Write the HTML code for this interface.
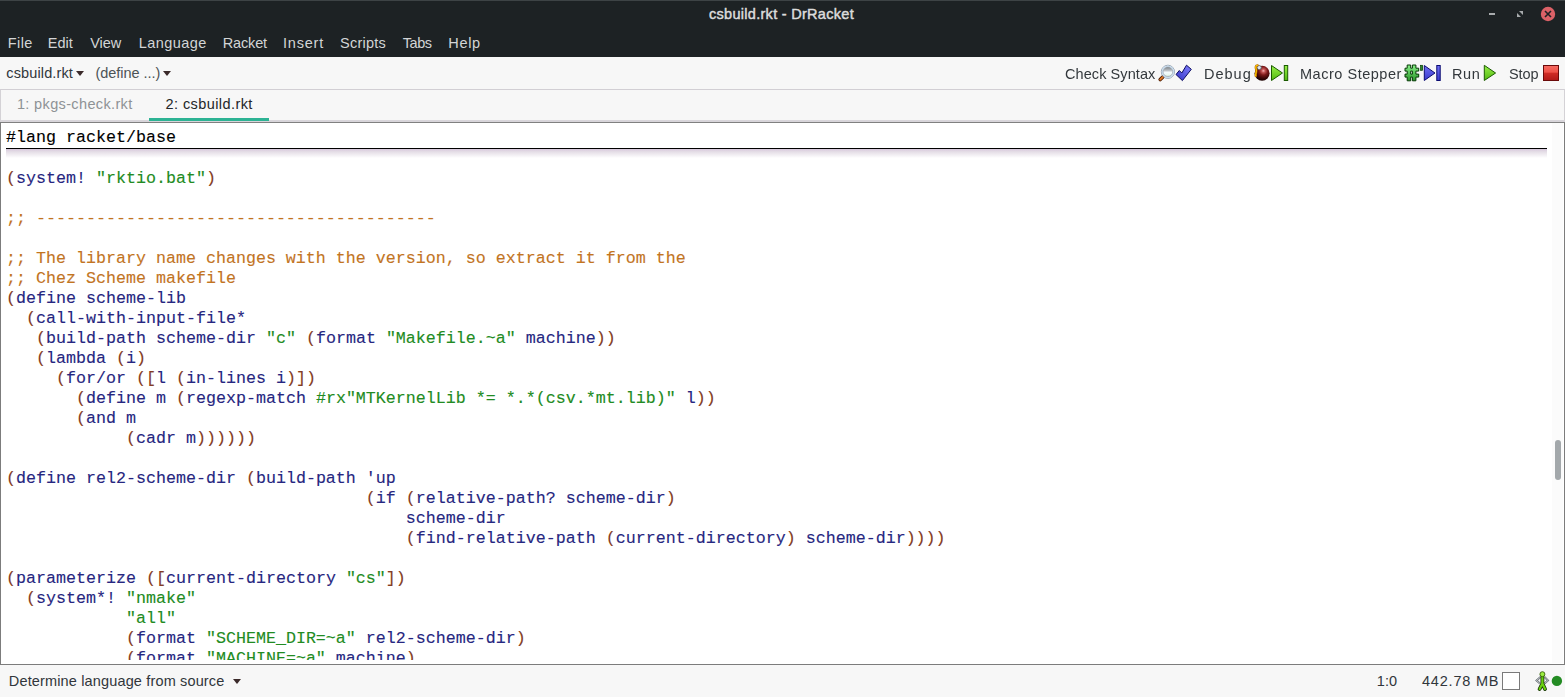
<!DOCTYPE html>
<html><head><meta charset="utf-8">
<style>
*{margin:0;padding:0;box-sizing:border-box}
html,body{width:1565px;height:697px;overflow:hidden;background:#f7f7f7;font-family:"Liberation Sans",sans-serif}
.a{position:absolute;white-space:pre;line-height:1}
#title{position:absolute;left:0;top:0;width:1565px;height:57px;background:#1d2224;border-top:1px solid #3d4345}
#ttext{left:709px;top:5px;font-size:15px;font-weight:normal;-webkit-text-stroke:0.45px #dcdcdc;color:#dcdcdc}
.m{top:36px;font-size:14.5px;color:#d3d5d6}
.tb{font-size:14.5px;color:#31363b}
.tbl{top:66px}
.tbr{top:67px;color:#33383c;will-change:transform}
.tab{top:97px;font-size:14.5px}
#tabs{position:absolute;left:0;top:89px;width:1565px;height:33px;background:#f7f7f7;border-top:1px solid #d2cfd4;border-left:1px solid #d4d2d6;border-right:1px solid #d4d2d6;border-bottom:2px solid #d8d5da}
#editor{position:absolute;left:0;top:122px;width:1565px;height:543px;background:#fff;border-top:1px solid #808080;border-left:1px solid #7c7c7c;border-right:1px solid #7c7c7c;border-bottom:1px solid #7c7c7c;overflow:hidden}
#status{position:absolute;left:0;top:665px;width:1565px;height:32px;background:#f7f7f7}
.code{position:absolute;left:6px;font-family:"Liberation Mono",monospace;font-size:16.67px;line-height:20px;white-space:pre;color:#262680;-webkit-text-stroke:0.12px currentColor}
.p{color:#843c24}.s{color:#228b22}.c{color:#c2741f}.k{color:#000}
svg{position:absolute;overflow:visible}
</style></head><body>
<div id="title"></div>
<div class="a" id="ttext" style="font-size:14.5px;top:7px;letter-spacing:0.29px">csbuild.rkt - DrRacket</div>
<!-- window buttons -->
<div class="a" style="left:1489px;top:13px;width:6px;height:2px;background:#a8abad"></div>
<svg style="left:1517px;top:11px" width="6" height="6"><path d="M0 6V2L4 6Z M6 0V4L2 0Z" fill="#a8abad"/></svg>
<svg style="left:1540px;top:6px" width="16" height="16"><circle cx="8" cy="8" r="7.2" fill="#db6167"/><path d="M5 5L11 11M11 5L5 11" stroke="#1d2224" stroke-width="1.6"/></svg>

<div class="a m" style="letter-spacing:0.40px;left:7.8px">File</div>
<div class="a m" style="letter-spacing:0.03px;left:47.7px">Edit</div>
<div class="a m" style="letter-spacing:-0.10px;left:90.3px">View</div>
<div class="a m" style="letter-spacing:0.44px;left:138.8px">Language</div>
<div class="a m" style="letter-spacing:-0.16px;left:222.8px">Racket</div>
<div class="a m" style="letter-spacing:0.80px;left:283.0px">Insert</div>
<div class="a m" style="letter-spacing:0.25px;left:340.0px">Scripts</div>
<div class="a m" style="letter-spacing:-0.47px;left:402.8px">Tabs</div>
<div class="a m" style="letter-spacing:0.67px;left:448.3px">Help</div>

<div class="a tb tbl" style="letter-spacing:0.13px;left:6.3px">csbuild.rkt</div>
<svg style="left:76px;top:71px" width="9" height="5"><path d="M0 0H8L4 5Z" fill="#3b2a2a"/></svg>
<div class="a tb tbl" style="color:#4d5356;letter-spacing:-0.05px;left:95.5px">(define ...)</div>
<svg style="left:163px;top:71px" width="9" height="5"><path d="M0 0H8L4 5Z" fill="#3b2a2a"/></svg>

<div class="a tb tbr" style="letter-spacing:0.08px;left:1064.5px">Check Syntax</div>
<svg style="left:1158px;top:64px" width="36" height="18">
 <defs>
  <linearGradient id="lens" x1="0" y1="0" x2="0" y2="1"><stop offset="0" stop-color="#7c8288"/><stop offset="0.35" stop-color="#b8bdc2"/><stop offset="0.55" stop-color="#f4fcff"/><stop offset="0.8" stop-color="#eaf8f4"/><stop offset="1" stop-color="#c8dcc8"/></linearGradient>
  <linearGradient id="chk" x1="1" y1="0" x2="0" y2="1"><stop offset="0" stop-color="#8080ff"/><stop offset="1" stop-color="#3434c4"/></linearGradient>
  <linearGradient id="grn" x1="0" y1="0" x2="0" y2="1"><stop offset="0" stop-color="#98f048"/><stop offset="1" stop-color="#52b810"/></linearGradient>
  <linearGradient id="blu" x1="0" y1="0" x2="0" y2="1"><stop offset="0" stop-color="#7070f4"/><stop offset="1" stop-color="#3838cc"/></linearGradient>
  <linearGradient id="hsh" x1="0" y1="0" x2="0" y2="1"><stop offset="0" stop-color="#88f088"/><stop offset="1" stop-color="#2a962a"/></linearGradient>
  <radialGradient id="bmb" cx="0.55" cy="0.35" r="0.7"><stop offset="0" stop-color="#f0a0a0"/><stop offset="0.3" stop-color="#b04444"/><stop offset="0.7" stop-color="#621010"/><stop offset="1" stop-color="#2a0404"/></radialGradient>
 </defs>
 <path d="M2.2 15.6L4.8 13" stroke="#4a1a00" stroke-width="3.6" stroke-linecap="round"/>
 <path d="M2.2 15.6L4.8 13" stroke="#e07a28" stroke-width="1.8" stroke-linecap="round"/>
 <circle cx="9.9" cy="7.8" r="4.8" fill="url(#lens)"/>
 <circle cx="9.9" cy="7.8" r="6.6" fill="none" stroke="#8090a0" stroke-width="0.8"/>
 <circle cx="9.9" cy="7.8" r="5.7" fill="none" stroke="#c8dcee" stroke-width="1.4"/>
 <circle cx="9.9" cy="7.8" r="4.8" fill="none" stroke="#8e9aa6" stroke-width="0.6"/>
 <path d="M18 10.5L21.3 6.5L23.8 9L28.5 1.2L33.3 5.3L24.4 16.6Z" fill="url(#chk)" stroke="#0a0a60" stroke-width="1"/>
</svg>
<div class="a tb tbr" style="letter-spacing:1.00px;left:1203.5px">Debug</div>
<svg style="left:1254px;top:64px" width="36" height="18">
 <defs><radialGradient id="bmb2" gradientUnits="userSpaceOnUse" cx="9.4" cy="6.8" r="9.5"><stop offset="0" stop-color="#f4b4b4"/><stop offset="0.18" stop-color="#c45454"/><stop offset="0.45" stop-color="#7a1818"/><stop offset="0.8" stop-color="#3a0606"/><stop offset="1" stop-color="#1e0202"/></radialGradient></defs>
 <circle cx="8.1" cy="9.2" r="7.5" fill="url(#bmb2)"/>
 <circle cx="5.2" cy="3.6" r="2.1" fill="#dfe6ec" stroke="#5c646a" stroke-width="0.9"/>
 <path d="M3.6 1.3C1.6 1.2 1.4 3.2 2.2 5.4S1.2 9.6 1.8 12" stroke="#b86000" stroke-width="2.3" fill="none" stroke-linecap="round"/>
 <path d="M3.6 1.3C1.6 1.2 1.4 3.2 2.2 5.4S1.2 9.6 1.8 12" stroke="#ffd400" stroke-width="1.1" fill="none" stroke-linecap="round"/>
 <path d="M17.5 1.5V16.5L28.5 9Z" fill="url(#grn)" stroke="#1a5a00" stroke-width="1"/>
 <rect x="30.3" y="1.5" width="3.4" height="15" fill="url(#grn)" stroke="#1a5a00" stroke-width="1"/>
</svg>
<div class="a tb tbr" style="letter-spacing:0.52px;left:1299.5px">Macro Stepper</div>
<svg style="left:1405px;top:64px" width="36" height="18">
 <path d="M2.2 1H5.7V4.2H7.4V1H10.9V4.2H13.7V7.1H10.9V10.1H13.7V13.1H10.9V16.8H7.4V13.1H5.7V16.8H2.2V13.1H0V10.1H2.2V7.1H0V4.2H2.2Z M5.7 7.1H7.4V10.1H5.7Z" fill="url(#hsh)" stroke="#063a06" stroke-width="1" fill-rule="evenodd"/>
 <rect x="15.6" y="1.3" width="2" height="5" fill="#2a8a2a" stroke="#063a06" stroke-width="0.7"/>
 <path d="M19.3 1.5V16.5L30 9Z" fill="url(#blu)" stroke="#0a0a70" stroke-width="1"/>
 <rect x="31.8" y="1.5" width="3.4" height="15" fill="url(#blu)" stroke="#0a0a70" stroke-width="1"/>
</svg>
<div class="a tb tbr" style="letter-spacing:0.55px;left:1452.4px">Run</div>
<svg style="left:1483px;top:64px" width="14" height="18"><path d="M1.3 1.3V16.5L12.6 9Z" fill="url(#grn)" stroke="#1a5a00" stroke-width="1"/></svg>
<div class="a tb tbr" style="letter-spacing:-0.07px;left:1508.5px">Stop</div>
<svg style="left:1543px;top:65px" width="16" height="16"><defs><linearGradient id="red" x1="0" y1="0" x2="0" y2="1"><stop offset="0" stop-color="#f46a62"/><stop offset="0.45" stop-color="#f05248"/><stop offset="0.5" stop-color="#d02c26"/><stop offset="1" stop-color="#b01a18"/></linearGradient></defs><rect x="0.5" y="0.5" width="15" height="15" fill="url(#red)" stroke="#6a0a0a" stroke-width="1"/></svg>

<div id="tabs"></div>
<div class="a tab" style="color:#8e9295;letter-spacing:0.36px;left:16.9px">1: pkgs-check.rkt</div>
<div class="a tab" style="color:#232629;letter-spacing:0.42px;left:165.5px">2: csbuild.rkt</div>
<div class="a" style="left:149px;top:118px;width:120px;height:3px;background:#2db394"></div>

<div id="editor">
<div class="code k" style="top:5px;left:5px">#lang racket/base</div>
<div style="position:absolute;left:5px;top:25px;width:1541px;height:1px;background:#000"></div>
<div style="position:absolute;left:5px;top:26px;width:1541px;height:9px;background:linear-gradient(#d8c8dc,#e4dde6 30%,#fff)"></div>
<div style="position:absolute;left:1551px;top:0;width:11px;height:540px;background:#fbfbfb"></div>
<div style="position:absolute;left:1554px;top:317px;width:6px;height:40px;border-radius:3px;background:#a3a8ab"></div>
<div class="code" style="top:46px;left:5px"><span class="p">(</span>system! <span class="s">"rktio.bat"</span><span class="p">)</span>

<span class="c">;; ----------------------------------------</span>

<span class="c">;; The library name changes with the version, so extract it from the</span>
<span class="c">;; Chez Scheme makefile</span>
<span class="p">(</span>define scheme-lib
  <span class="p">(</span>call-with-input-file*
   <span class="p">(</span>build-path scheme-dir <span class="s">"c"</span> <span class="p">(</span>format <span class="s">"Makefile.~a"</span> machine<span class="p">))</span>
   <span class="p">(</span>lambda <span class="p">(</span>i<span class="p">)</span>
     <span class="p">(</span>for/or <span class="p">([</span>l <span class="p">(</span>in-lines i<span class="p">)])</span>
       <span class="p">(</span>define m <span class="p">(</span>regexp-match <span class="s">#rx"MTKernelLib *= *.*(csv.*mt.lib)"</span> l<span class="p">))</span>
       <span class="p">(</span>and m
            <span class="p">(</span>cadr m<span class="p">))))))</span>

<span class="p">(</span>define rel2-scheme-dir <span class="p">(</span>build-path 'up
                                    <span class="p">(</span>if <span class="p">(</span>relative-path? scheme-dir<span class="p">)</span>
                                        scheme-dir
                                        <span class="p">(</span>find-relative-path <span class="p">(</span>current-directory<span class="p">)</span> scheme-dir<span class="p">))))</span>

<span class="p">(</span>parameterize <span class="p">([</span>current-directory <span class="s">"cs"</span><span class="p">])</span>
  <span class="p">(</span>system*! <span class="s">"nmake"</span>
            <span class="s">"all"</span>
            <span class="p">(</span>format <span class="s">"SCHEME_DIR=~a"</span> rel2-scheme-dir<span class="p">)</span>
            <span class="p">(</span>format <span class="s">"MACHINE=~a"</span> machine<span class="p">)</span></div>
<div style="position:absolute;left:0;top:537px;width:1551px;height:4px;background:#fff"></div>
</div>

<div id="status"></div>
<div class="a tb" style="top:674px;letter-spacing:0.15px;left:8.8px">Determine language from source</div>
<svg style="left:233px;top:679px" width="9" height="5"><path d="M0 0H8L4 5Z" fill="#3b2a2a"/></svg>
<div class="a tb" style="top:674px;letter-spacing:0.10px;left:1376.8px">1:0</div>
<div class="a tb" style="top:674px;letter-spacing:0.79px;left:1422.0px">442.78 MB</div>
<div class="a" style="left:1502px;top:672px;width:18px;height:18px;background:#fff;border:1px solid #7a7a7a"></div>
<svg style="left:1535px;top:671px" width="14" height="20">
 <path d="M5.5 6L1.5 9.5L5 12.5M9.5 6L13 9.5L9.5 12.5" stroke="#5a6268" stroke-width="1.8" fill="none"/>
 <path d="M5.5 6L1.5 9.5L5 12.5M9.5 6L13 9.5L9.5 12.5" stroke="#f4f6f8" stroke-width="0.7" fill="none"/>
 <path d="M7.4 5V12.5L4.6 18M7.4 12.5L10 18" stroke="#123000" stroke-width="3.8" stroke-linecap="round" stroke-linejoin="round" fill="none"/>
 <path d="M7.4 5V12.5L4.6 18M7.4 12.5L10 18" stroke="#6ad010" stroke-width="2.2" stroke-linecap="round" stroke-linejoin="round" fill="none"/>
 <circle cx="7.4" cy="3.2" r="2.5" fill="#9aec40" stroke="#2a5000" stroke-width="0.8"/>
</svg>
<svg style="left:1551px;top:675px" width="12" height="12"><circle cx="5.9" cy="5.9" r="5.2" fill="#238b23"/></svg>
</body></html>
